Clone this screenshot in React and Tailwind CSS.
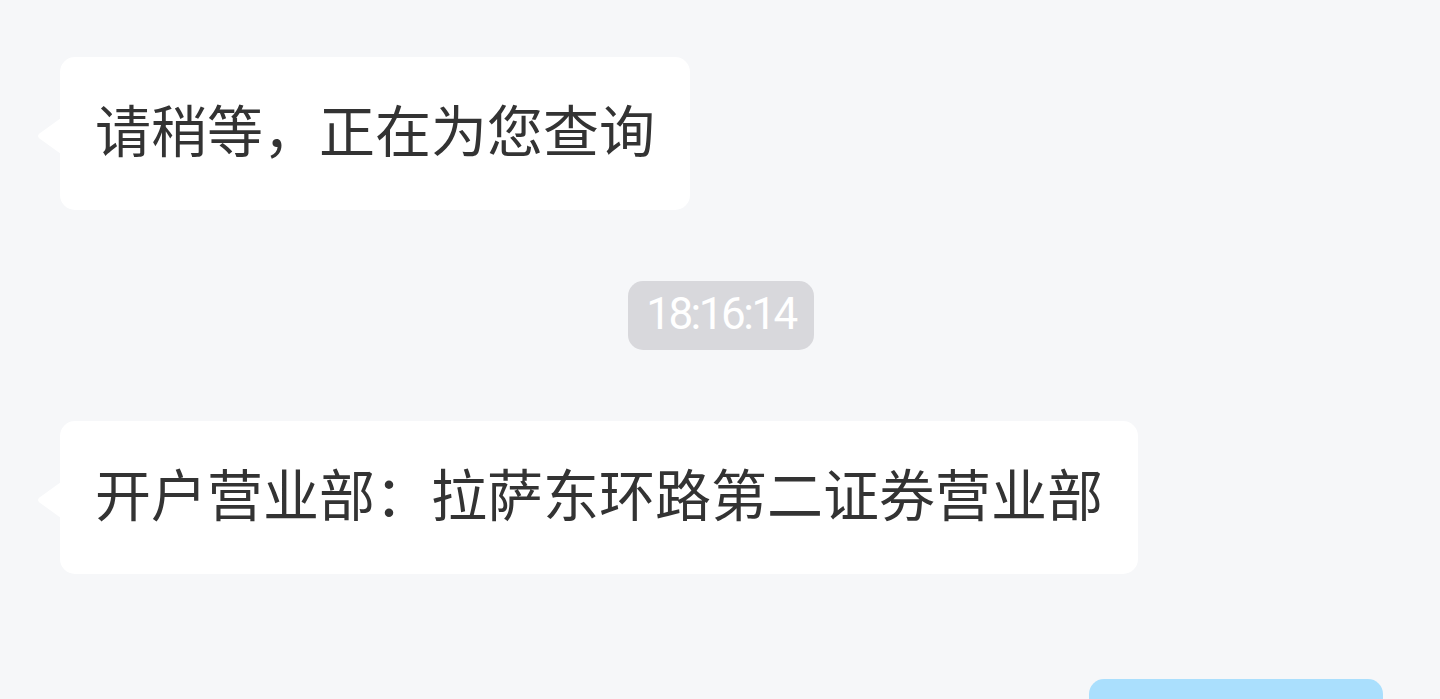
import React from "react";

const Tail = ({ side = "left", color }) => (
  <svg
    width="25"
    height="36"
    viewBox="0 0 25 36"
    className={
      side === "left"
        ? "absolute left-[-24px] top-[61px]"
        : "absolute right-[-24px] top-[61px] -scale-x-100"
    }
  >
    <path d="M25 0 L3.5 15.5 Q0.5 18 3.5 20.5 L25 36 Z" fill={color} />
  </svg>
);

const LeftBubble = ({ text }) => (
  <div className="relative self-start shrink-0 ml-[60px] h-[153px] bg-white rounded-[15px] px-[35px] pt-[31px]">
    <Tail side="left" color="#ffffff" />
    <p className="text-[56px] leading-[80px] text-[#333333] whitespace-nowrap">{text}</p>
  </div>
);

const App = () => {
  const messages = [
    { type: "left", text: "请稍等，正在为您查询" },
    { type: "time", text: "18:16:14" },
    { type: "left", text: "开户营业部：拉萨东环路第二证券营业部" },
  ];

  return (
    <div
      className="w-[1440px] h-[699px] overflow-hidden bg-[#f6f7f9] flex flex-col pt-[57px]"
      style={{ fontFamily: '"Noto Sans CJK SC", "Noto Sans", sans-serif' }}
    >
      {messages.map((m, i) =>
        m.type === "time" ? (
          <div key={i} className="self-center shrink-0 my-[71px] ml-[2px] h-[69px] w-[186px] rounded-[15px] bg-[#d8d8dc] flex items-center justify-center">
            <span className="text-white text-[44px] leading-none tracking-[-2.5px] pb-[3px] font-['Roboto',sans-serif]">
              {m.text}
            </span>
          </div>
        ) : (
          <LeftBubble key={i} text={m.text} />
        )
      )}

      {/* 自己发送的消息 (画面底部只露出一部分) */}
      <div className="relative self-end shrink-0 mr-[57px] mt-[105px] w-[294px] h-[153px] bg-[#aadffd] rounded-[15px]">
        <Tail side="right" color="#aadffd" />
      </div>
    </div>
  );
};

export default App;
